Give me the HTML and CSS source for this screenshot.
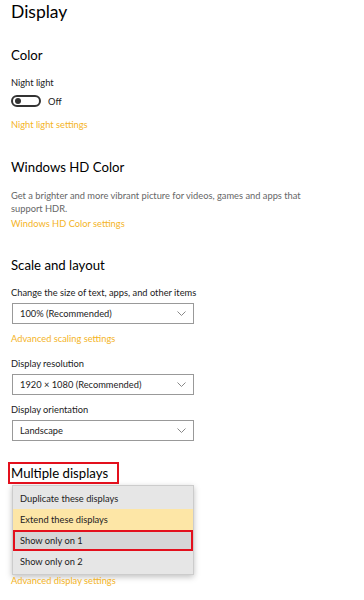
FILE: index.html
```html
<!DOCTYPE html>
<html>
<head>
<meta charset="utf-8">
<link rel="stylesheet" href="styles.css">
</head>
<body>
<div class="page">
   <h1 class="title">Display</h1>

   <h2 class="heading first">Color</h2>
   <div class="label night">Night light</div>
   <div class="toggle-row">
      <span class="toggle"><span class="knob"></span></span>
      <span class="toggle-text">Off</span>
   </div>
   <div class="link night-link">Night light settings</div>

   <h2 class="heading hd">Windows HD Color</h2>
   <p class="desc">Get a brighter and more vibrant picture for videos, games and apps that support HDR.</p>
   <div class="link tight">Windows HD Color settings</div>

   <h2 class="heading scale">Scale and layout</h2>
   <div class="label">Change the size of text, apps, and other items</div>
   <div class="select">
      <span>100% (Recommended)</span>
      <svg class="chev" width="9" height="5" viewBox="0 0 9 5"><path d="M0.5 0.5 L4.5 4.5 L8.5 0.5" fill="none" stroke="#888" stroke-width="1"/></svg>
   </div>
   <div class="link">Advanced scaling settings</div>

   <div class="label spaced">Display resolution</div>
   <div class="select">
      <span>1920 × 1080 (Recommended)</span>
      <svg class="chev" width="9" height="5" viewBox="0 0 9 5"><path d="M0.5 0.5 L4.5 4.5 L8.5 0.5" fill="none" stroke="#888" stroke-width="1"/></svg>
   </div>
   <div class="label">Display orientation</div>
   <div class="select">
      <span>Landscape</span>
      <svg class="chev" width="9" height="5" viewBox="0 0 9 5"><path d="M0.5 0.5 L4.5 4.5 L8.5 0.5" fill="none" stroke="#888" stroke-width="1"/></svg>
   </div>

   <h2 class="heading boxed">Multiple displays</h2>
   <ul class="menu">
      <li>Duplicate these displays</li>
      <li class="current">Extend these displays</li>
      <li class="marked">Show only on 1</li>
      <li>Show only on 2</li>
   </ul>
   <div class="link after-menu">Advanced display settings</div>
</div>
</body>
</html>
```

FILE: styles.css
```css
body{
   margin: 0;
   background: #fff;
   font-family: Lato, "Open Sans", sans-serif;
   color: #1a1a1a;
}
.page{
   padding-left: 11px;
   width: 300px;
}
.title{
   margin: 0;
   padding-top: 1px;
   font-size: 17.5px;
   font-weight: 400;
   line-height: 22px;
   color: #000;
}
.heading{
   margin: 24px 0 0 0;
   font-size: 13.2px;
   font-weight: 400;
   line-height: 20px;
   color: #000;
}
.heading.first{
   margin-top: 22px;
}
.heading.hd{
   margin-top: 25px;
}
.heading.scale{
   margin-top: 24px;
}
.label{
   margin-top: 11px;
   font-size: 9.3px;
   line-height: 14px;
}
.label.spaced{
   margin-top: 11px;
}
.toggle-row{
   display: flex;
   align-items: center;
   gap: 7px;
   margin-top: 5px;
   height: 12px;
   font-size: 9.3px;
}
.toggle{
   display: flex;
   align-items: center;
   box-sizing: border-box;
   width: 30px;
   height: 12px;
   border: 2px solid #333;
   border-radius: 6px;
   padding-left: 2px;
}
.knob{
   width: 6px;
   height: 6px;
   border-radius: 50%;
   background: #333;
}
.link{
   margin-top: 10px;
   font-size: 9.3px;
   line-height: 14px;
   color: #f4b41f;
}
.link.night-link{
   margin-top: 11px;
}
.link.tight{
   margin-top: 2px;
}
.desc{
   margin: 12px 0 0 0;
   width: 292px;
   font-size: 9.3px;
   line-height: 13px;
   color: #666;
}
.select{
   display: flex;
   align-items: center;
   justify-content: space-between;
   box-sizing: border-box;
   width: 182px;
   height: 21px;
   margin: 3px 0 0 1px;
   padding: 0 7px 0 7px;
   border: 1px solid #999;
   font-size: 9.3px;
   color: #222;
}
.select + .link,
.select + .label{
   margin-top: 8px;
}
.heading.boxed{
   display: inline-block;
   margin: 21px 0 0 -3px;
   padding: 0 9px 0 1px;
   border: 2px solid #e3101d;
   line-height: 18px;
}
.menu{
   list-style: none;
   box-sizing: border-box;
   width: 182px;
   margin: 1px 0 0 1px;
   padding: 2px 0;
   background: #e6e6e6;
   border: 1px solid #ccc;
   box-shadow: 0 2px 6px rgba(0,0,0,0.25);
   font-size: 9.3px;
   color: #222;
}
.menu li{
   box-sizing: border-box;
   height: 21px;
   line-height: 21px;
   padding-left: 7px;
}
.menu li.current{
   background: #fde6a6;
}
.menu li.marked{
   background: #d6d6d6;
   border: 2px solid #e3101d;
   line-height: 17px;
   padding-left: 5px;
}
.link.after-menu{
   margin-top: 0;
   line-height: 12px;
}
```
